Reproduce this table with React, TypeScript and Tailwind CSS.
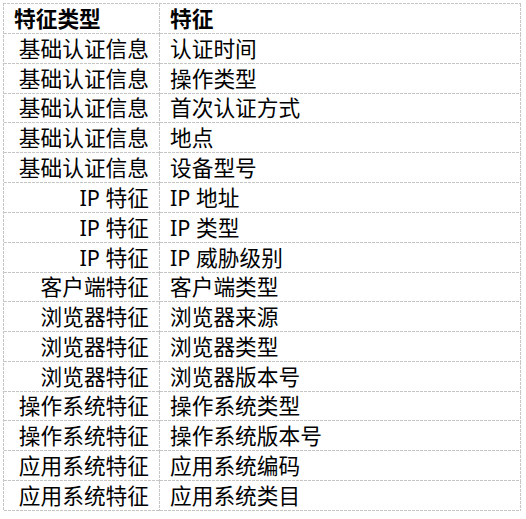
const rows: { type: string; feature: string; h: string }[] = [
  { type: '基础认证信息', feature: '认证时间', h: 'h-[30px]' },
  { type: '基础认证信息', feature: '操作类型', h: 'h-[30px]' },
  { type: '基础认证信息', feature: '首次认证方式', h: 'h-[29px]' },
  { type: '基础认证信息', feature: '地点', h: 'h-[30px]' },
  { type: '基础认证信息', feature: '设备型号', h: 'h-[30px]' },
  { type: 'IP 特征', feature: 'IP 地址', h: 'h-[30px]' },
  { type: 'IP 特征', feature: 'IP 类型', h: 'h-[30px]' },
  { type: 'IP 特征', feature: 'IP 威胁级别', h: 'h-[30px]' },
  { type: '客户端特征', feature: '客户端类型', h: 'h-[29px]' },
  { type: '浏览器特征', feature: '浏览器来源', h: 'h-[30px]' },
  { type: '浏览器特征', feature: '浏览器类型', h: 'h-[30px]' },
  { type: '浏览器特征', feature: '浏览器版本号', h: 'h-[30px]' },
  { type: '操作系统特征', feature: '操作系统类型', h: 'h-[29px]' },
  { type: '操作系统特征', feature: '操作系统版本号', h: 'h-[30px]' },
  { type: '应用系统特征', feature: '应用系统编码', h: 'h-[30px]' },
  { type: '应用系统特征', feature: '应用系统类目', h: 'h-[30px]' },
];

// dashed grid lines drawn as gradients (bottom + right edge of each cell)
const cellLines =
  '[background:repeating-linear-gradient(to_right,#c6c6c6_0_3px,transparent_3px_4px)_left_bottom/100%_1px_no-repeat,repeating-linear-gradient(to_bottom,#c6c6c6_0_3px,transparent_3px_4px)_right_top/1px_100%_no-repeat]';
const outerLines =
  '[background:repeating-linear-gradient(to_right,#c6c6c6_0_3px,transparent_3px_4px)_left_top/100%_1px_no-repeat,repeating-linear-gradient(to_bottom,#c6c6c6_0_3px,transparent_3px_4px)_left_top/1px_100%_no-repeat]';

export default function App() {
  return (
    <div className="min-h-screen bg-white pt-[3px] pl-[3px] font-['Noto_Sans','Noto_Sans_CJK_SC',sans-serif] text-[21.7px] text-black">
      <div className={`w-[518px] pt-px pl-px ${outerLines}`}>
        <div className="grid h-[30px] grid-cols-[156px_361px] font-bold">
          <div className={`flex items-center pl-[10px] pb-px leading-none ${cellLines}`}>特征类型</div>
          <div className={`flex items-center pl-[10px] pb-px leading-none ${cellLines}`}>特征</div>
        </div>
        {rows.map((r, i) => (
          <div key={i} className={`grid grid-cols-[156px_361px] ${r.h}`}>
            <div className={`flex items-center justify-end pr-[11px] pb-px leading-none ${cellLines}`}>
              {r.type}
            </div>
            <div className={`flex items-center pl-[10px] pb-px leading-none ${cellLines}`}>
              {r.feature}
            </div>
          </div>
        ))}
      </div>
    </div>
  );
}
